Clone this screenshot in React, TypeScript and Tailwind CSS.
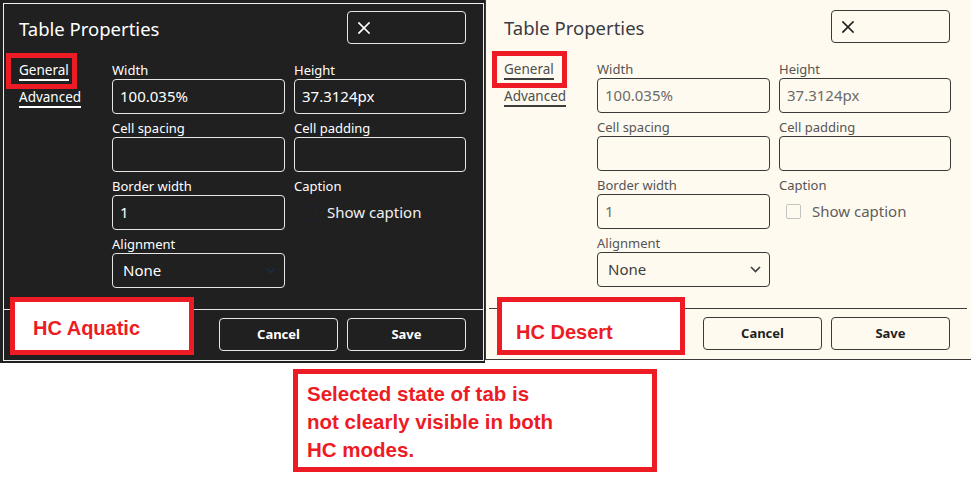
import React from "react";

type Theme = {
  title: string;
  label: string;
  value: string;
  select: string;
  tab: string;
  field: string;
  btn: string;
  sep: string;
  check: string;
  chevron: string;
  caption: string;
};

const dark: Theme = {
  title: "text-white",
  label: "text-white",
  value: "text-white",
  select: "text-white",
  tab: "text-white border-white",
  field: "border-[#e6e6e6] bg-[#202020]",
  btn: "border-[#e6e6e6] bg-[#202020] text-white",
  sep: "border-[#e6e6e6]",
  check: "border-[#1b2330]",
  chevron: "text-[#1d2b40]",
  caption: "text-[#f0f0f0]",
};

const light: Theme = {
  title: "text-[#3b3b45]",
  label: "text-[#555555]",
  value: "text-[#6b6b6b]",
  select: "text-[#3d3d3d]",
  tab: "text-[#4d4d4d] border-[#3d3d3d]",
  field: "border-[#3a3a3a] bg-[#fffaef]",
  btn: "border-[#3a3a3a] bg-[#fffaef] text-[#1f1f1f]",
  sep: "border-[#3a3a3a]",
  check: "border-[#c4c4c4]",
  chevron: "text-[#3d3d3d]",
  caption: "text-[#5e5e5e]",
};

function Label({ t, children }: { t: Theme; children: React.ReactNode }) {
  return <div className={`h-[17px] text-[13px] leading-[17px] ${t.label}`}>{children}</div>;
}

function TextField({ t, label, value }: { t: Theme; label: string; value?: string }) {
  return (
    <div className="flex flex-col">
      <Label t={t}>{label}</Label>
      <div
        className={`h-[35px] rounded-[4px] border flex items-center pl-[7px] text-[15px] ${t.field} ${t.value}`}
      >
        {value}
      </div>
    </div>
  );
}

function Dialog({ t }: { t: Theme }) {
  return (
    <div className="flex flex-col h-full w-full font-['Noto_Sans',sans-serif]">
      <div className="flex items-start justify-between pr-[17px]">
        <div className={`ml-[15px] mt-[11px] text-[18.5px] leading-[28px] ${t.title}`}>Table Properties</div>
        <div className={`mt-[7px] w-[119px] h-[33px] rounded-[4px] border flex items-center pl-[10px] ${t.btn}`}>
          <svg width="12" height="12" viewBox="0 0 12 12">
            <path d="M1 1L11 11M11 1L1 11" stroke="currentColor" strokeWidth="1.7" strokeLinecap="square" />
          </svg>
        </div>
      </div>
      <div className="flex mt-[18px]">
        <div className="w-[93px] ml-[15px] flex flex-col items-start gap-[8px]">
          <span className={`text-[13.5px] leading-[17px] border-b-2 ${t.tab}`}>General</span>
          <span className={`text-[13.5px] leading-[17px] border-b-2 ${t.tab}`}>Advanced</span>
        </div>
        <div className="grid grid-cols-[173px_172px] gap-x-[9px] gap-y-[6px]">
          <TextField t={t} label="Width" value="100.035%" />
          <TextField t={t} label="Height" value="37.3124px" />
          <TextField t={t} label="Cell spacing" />
          <TextField t={t} label="Cell padding" />
          <TextField t={t} label="Border width" value="1" />
          <div className="flex flex-col">
            <Label t={t}>Caption</Label>
            <div className="h-[35px] flex items-center pl-[7px] gap-[11px]">
              <div className={`w-[15px] h-[15px] rounded-[2px] border ${t.check}`} />
              <span className={`text-[15px] ${t.caption}`}>Show caption</span>
            </div>
          </div>
          <div className="flex flex-col">
            <Label t={t}>Alignment</Label>
            <div
              className={`h-[35px] rounded-[4px] border flex items-center justify-between pl-[10px] pr-[8px] text-[15px] ${t.field} ${t.select}`}
            >
              <span>None</span>
              <svg width="11" height="7" viewBox="0 0 11 7" className={t.chevron}>
                <path d="M1 1L5.5 5.5L10 1" fill="none" stroke="currentColor" strokeWidth="1.6" />
              </svg>
            </div>
          </div>
          <div />
        </div>
      </div>
      <div className={`mt-auto border-t pt-[8px] pb-[9px] pr-[17px] flex justify-end gap-[9px] ${t.sep}`}>
        <div className={`w-[119px] h-[33px] rounded-[4px] border flex items-center justify-center text-[13px] font-bold ${t.btn}`}>
          Cancel
        </div>
        <div className={`w-[119px] h-[33px] rounded-[4px] border flex items-center justify-center text-[13px] font-bold ${t.btn}`}>
          Save
        </div>
      </div>
    </div>
  );
}

export default function App() {
  return (
    <div className="relative w-[971px] h-[482px] bg-white overflow-hidden">
      <div className="flex items-start">
        <div className="w-[485px] h-[363px] bg-[#202020] pt-[3px] pl-[3px]">
          <div className="w-[481px] h-[358px] border border-[#f0f0f0]">
            <Dialog t={dark} />
          </div>
        </div>
        <div className="w-[486px] h-[360px] bg-[#fffaef] border-l border-b border-[#3a3a3a] pt-[3px] pl-[3px] pr-[4px]">
          <Dialog t={light} />
        </div>
      </div>

      <div className="ml-[293px] mt-[6px] w-[364px] h-[103px] border-[5px] border-[#ed1c24] bg-white pl-[9px] pt-[6px] font-['Liberation_Sans',Arial,sans-serif] font-bold text-[20.5px] leading-[28px] text-[#ed1c24]">
        <div>Selected state of tab is</div>
        <div>not clearly visible in both</div>
        <div>HC modes.</div>
      </div>

      <div className="absolute left-[6px] top-[53px] w-[71px] h-[36px] border-[5px] border-[#ed1c24]" />
      <div className="absolute left-[492px] top-[51px] w-[75px] h-[37px] border-[5px] border-[#ed1c24]" />

      <div className="absolute left-[10px] top-[297px] w-[184px] h-[58px] border-[5px] border-[#ed1c24] bg-white flex items-center pl-[18px] pt-[4px] font-['Liberation_Sans',Arial,sans-serif] font-bold text-[20px] text-[#ed1c24]">
        HC Aquatic
      </div>
      <div className="absolute left-[497px] top-[297px] w-[188px] h-[58px] border-[5px] border-[#ed1c24] bg-white flex items-center pl-[14px] pt-[12px] font-['Liberation_Sans',Arial,sans-serif] font-bold text-[20px] text-[#ed1c24]">
        HC Desert
      </div>
    </div>
  );
}
